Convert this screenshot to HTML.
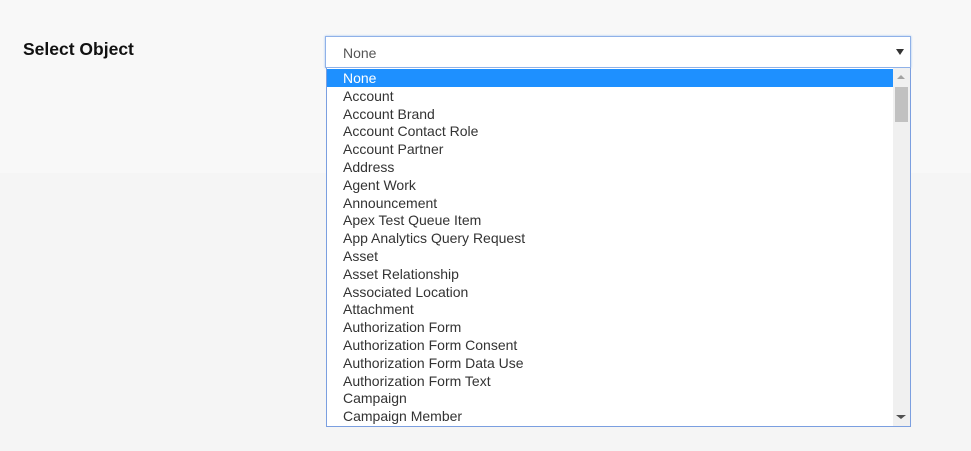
<!DOCTYPE html>
<html><head><style>
body{margin:0;width:971px;height:451px;background:#f5f5f5;font-family:"Liberation Sans",Arial,sans-serif;position:relative;overflow:hidden}
.panel{position:absolute;left:0;top:0;width:971px;height:173px;background:#f8f8f8}
.lbl{position:absolute;left:23px;top:39px;font-weight:bold;font-size:17.5px;color:#111}
.sel{position:absolute;left:325px;top:36px;width:584px;height:30px;border:1px solid #8fb1e8;background:#fff;box-shadow:0 0 2px #9ec0f0}
.sel span{position:absolute;left:17px;top:8px;font-size:14px;color:#555}
.sel i{position:absolute;right:6px;top:12px;width:0;height:0;border-left:4px solid transparent;border-right:4px solid transparent;border-top:6px solid #333}
.list{position:absolute;left:326px;top:68px;width:583px;height:358px;border:1px solid #7b9fe0;border-top:none;background:#fff;overflow:hidden}
.items{position:absolute;left:0;top:1px;width:567px}
.items div{height:17.8px;line-height:17.8px;font-size:14px;color:#333;padding-left:16px;padding-top:0}
.items div span{position:relative;top:1px}
.items div.on{background:#1e90ff;color:#fff}
.sb{position:absolute;right:0;top:0;width:17px;height:358px;background:#f0f0f0}
.thumb{position:absolute;left:2px;top:19px;width:13px;height:35px;background:#c1c1c1}
.up{position:absolute;left:4px;top:7px;border-left:4px solid transparent;border-right:4px solid transparent;border-bottom:4px solid #a3a3a3}
.dn{position:absolute;left:3px;bottom:7px;border-left:5px solid transparent;border-right:5px solid transparent;border-top:4px solid #505050}
</style></head><body>
<div class="panel"></div>
<div class="lbl">Select Object</div>
<div class="sel"><span>None</span><i></i></div>
<div class="list"><div class="items">
<div class="on"><span>None</span></div><div><span>Account</span></div><div><span>Account Brand</span></div><div><span>Account Contact Role</span></div><div><span>Account Partner</span></div><div><span>Address</span></div><div><span>Agent Work</span></div><div><span>Announcement</span></div><div><span>Apex Test Queue Item</span></div><div><span>App Analytics Query Request</span></div><div><span>Asset</span></div><div><span>Asset Relationship</span></div><div><span>Associated Location</span></div><div><span>Attachment</span></div><div><span>Authorization Form</span></div><div><span>Authorization Form Consent</span></div><div><span>Authorization Form Data Use</span></div><div><span>Authorization Form Text</span></div><div><span>Campaign</span></div><div><span>Campaign Member</span></div><div><span>Case</span></div>
</div>
<div class="sb"><div class="up"></div><div class="thumb"></div><div class="dn"></div></div>
</div>
</body></html>
